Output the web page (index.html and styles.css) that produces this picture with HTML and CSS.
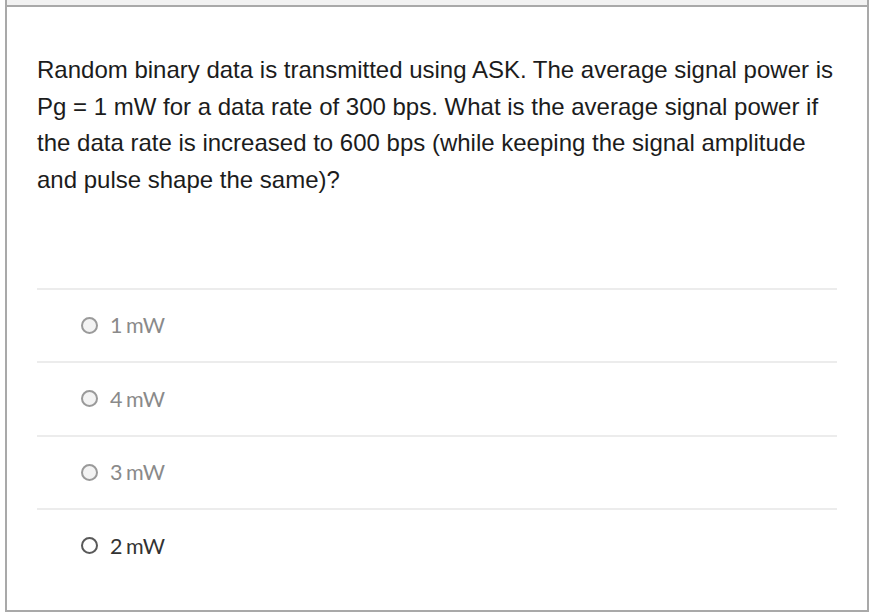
FILE: index.html
```html
<!DOCTYPE html>
<html>
<head>
<meta charset="utf-8">
<link rel="stylesheet" href="styles.css">
</head>
<body>
<div class="frame">
  <div class="band"></div>
  <div class="content">
    <p class="question">Random binary data is transmitted using ASK. The average signal power is Pg = 1 mW for a data rate of 300 bps. What is the average signal power if the data rate is increased to 600 bps (while keeping the signal amplitude and pulse shape the same)?</p>
    <ul class="options">
      <li class="option muted"><span class="radio"></span><span class="label">1 mW</span></li>
      <li class="option muted"><span class="radio"></span><span class="label">4 mW</span></li>
      <li class="option muted"><span class="radio"></span><span class="label">3 mW</span></li>
      <li class="option active"><span class="radio"></span><span class="label">2 mW</span></li>
    </ul>
  </div>
</div>
</body>
</html>
```

FILE: styles.css
```css
html, body {
  margin: 0;
  padding: 0;
  background: #ffffff;
}

.frame {
  margin: 0 5px;
  height: 610px;
  border: 2px solid #a9a9a9;
  border-top: 0;
  display: flex;
  flex-direction: column;
}

.band {
  height: 5px;
  background: #f2f2f2;
  border-bottom: 2px solid #a9a9a9;
}

.content {
  padding: 45px 30px 0 30px;
}

.question {
  margin: 0;
  font-family: "Liberation Sans", Arial, sans-serif;
  font-size: 24px;
  line-height: 36.67px;
  color: #1c1c1c;
}

.options {
  list-style: none;
  margin: 89px 0 0 0;
  padding: 0;
}

.option {
  height: 71.5px;
  border-top: 2px solid #ececec;
  display: flex;
  align-items: center;
  padding-left: 44px;
  gap: 12px;
  font-family: Lato, "Open Sans", sans-serif;
  font-size: 21.5px;
  word-spacing: -2px;
}

.radio {
  width: 17px;
  height: 17px;
  box-sizing: border-box;
  border-radius: 50%;
  border: 2px solid #9a9a9a;
  background: #f3f3f3;
  flex: none;
}

.muted .label {
  color: #8a8a8a;
}

.active .label {
  color: #333333;
}

.active .radio {
  border-color: #595959;
  background: #ffffff;
}
```
